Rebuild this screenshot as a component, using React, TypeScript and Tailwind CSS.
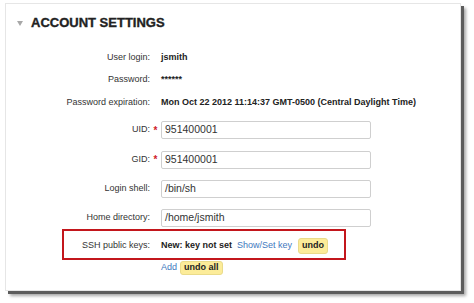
import React from 'react';

const font = { fontFamily: '"Liberation Sans", Arial, sans-serif' };

function Label({ text, star }: { text: string; star?: boolean }) {
  return (
    <>
      <div className="text-right text-[9px] text-[#333]">{text}</div>
      <div className="flex justify-center text-[10px] font-bold text-[#d0202a]">{star ? '*' : ''}</div>
    </>
  );
}

function TextRow({ label, value }: { label: string; value: string }) {
  return (
    <div className="grid h-[22px] grid-cols-[144px_11px_1fr] items-center">
      <Label text={label} />
      <div className="text-[9px] font-bold text-[#222]">{value}</div>
    </div>
  );
}

function InputRow({ label, value, star, h }: { label: string; value: string; star?: boolean; h: string }) {
  return (
    <div className={`grid grid-cols-[144px_11px_1fr] items-center ${h}`}>
      <Label text={label} star={star} />
      <div className="flex h-[18px] w-[210px] items-center rounded-[2px] border border-[#cfcfcf] bg-white pl-[3px] text-[10.5px] text-[#333]">
        {value}
      </div>
    </div>
  );
}

function Badge({ children, h }: { children: React.ReactNode; h: string }) {
  return (
    <span className={`inline-flex items-center rounded-[3px] border border-[#eadb8a] bg-[#fcec99] px-[3px] text-[9px] font-bold text-[#222] ${h}`}>
      {children}
    </span>
  );
}

export default function App() {
  return (
    <div className="h-[303px] w-[474px] bg-white pl-[5px] pt-[3px]" style={font}>
      <div className="h-[288px] w-[456px] border border-[#e6e6e6] bg-white shadow-[3px_3px_0_#5c5c5c,5px_5px_3px_rgba(0,0,0,0.35)]">
        {/* header */}
        <div className="flex h-[38px] items-center pl-[11px]">
          <svg width="6" height="5" viewBox="0 0 6 5" className="mr-[8px]">
            <polygon points="0,0 6,0 3,5" fill="#a8a8a8" />
          </svg>
          <h2 className="text-[13px] font-bold text-[#222] [-webkit-text-stroke:0.35px_#222]">ACCOUNT SETTINGS</h2>
        </div>

        <div className="mt-[5px]">
          <TextRow label="User login:" value="jsmith" />
          <TextRow label="Password:" value="******" />
          <div className="grid h-[24px] grid-cols-[144px_11px_1fr] items-center">
            <Label text="Password expiration:" />
            <div className="whitespace-nowrap text-[9px] font-bold text-[#222]">
              Mon Oct 22 2012 11:14:37 GMT-0500 (Central Daylight Time)
            </div>
          </div>
          <InputRow label="UID:" value="951400001" star h="h-[30px]" />
          <InputRow label="GID:" value="951400001" star h="h-[29px]" />
          <InputRow label="Login shell:" value="/bin/sh" h="h-[30px]" />
          <InputRow label="Home directory:" value="/home/jsmith" h="h-[28px]" />

          {/* highlighted ssh keys row */}
          <div className="-mt-[3px] ml-[56px] grid h-[31px] w-[284px] grid-cols-[86px_11px_1fr] items-center border-2 border-[#c3161c] pt-[2px]">
            <Label text="SSH public keys:" />
            <div className="flex items-center whitespace-nowrap text-[9px]">
              <span className="font-bold text-[#222]">New: key not set</span>
              <span className="ml-[5px] text-[#4178be]">Show/Set key</span>
              <span className="ml-[6px]"><Badge h="h-[16px]">undo</Badge></span>
            </div>
          </div>

          <div className="grid h-[15px] grid-cols-[144px_11px_1fr] items-center">
            <div />
            <div />
            <div className="flex items-center text-[9px]">
              <span className="text-[#4178be]">Add</span>
              <span className="ml-[3px]"><Badge h="h-[14px]">undo all</Badge></span>
            </div>
          </div>
        </div>
      </div>
    </div>
  );
}
